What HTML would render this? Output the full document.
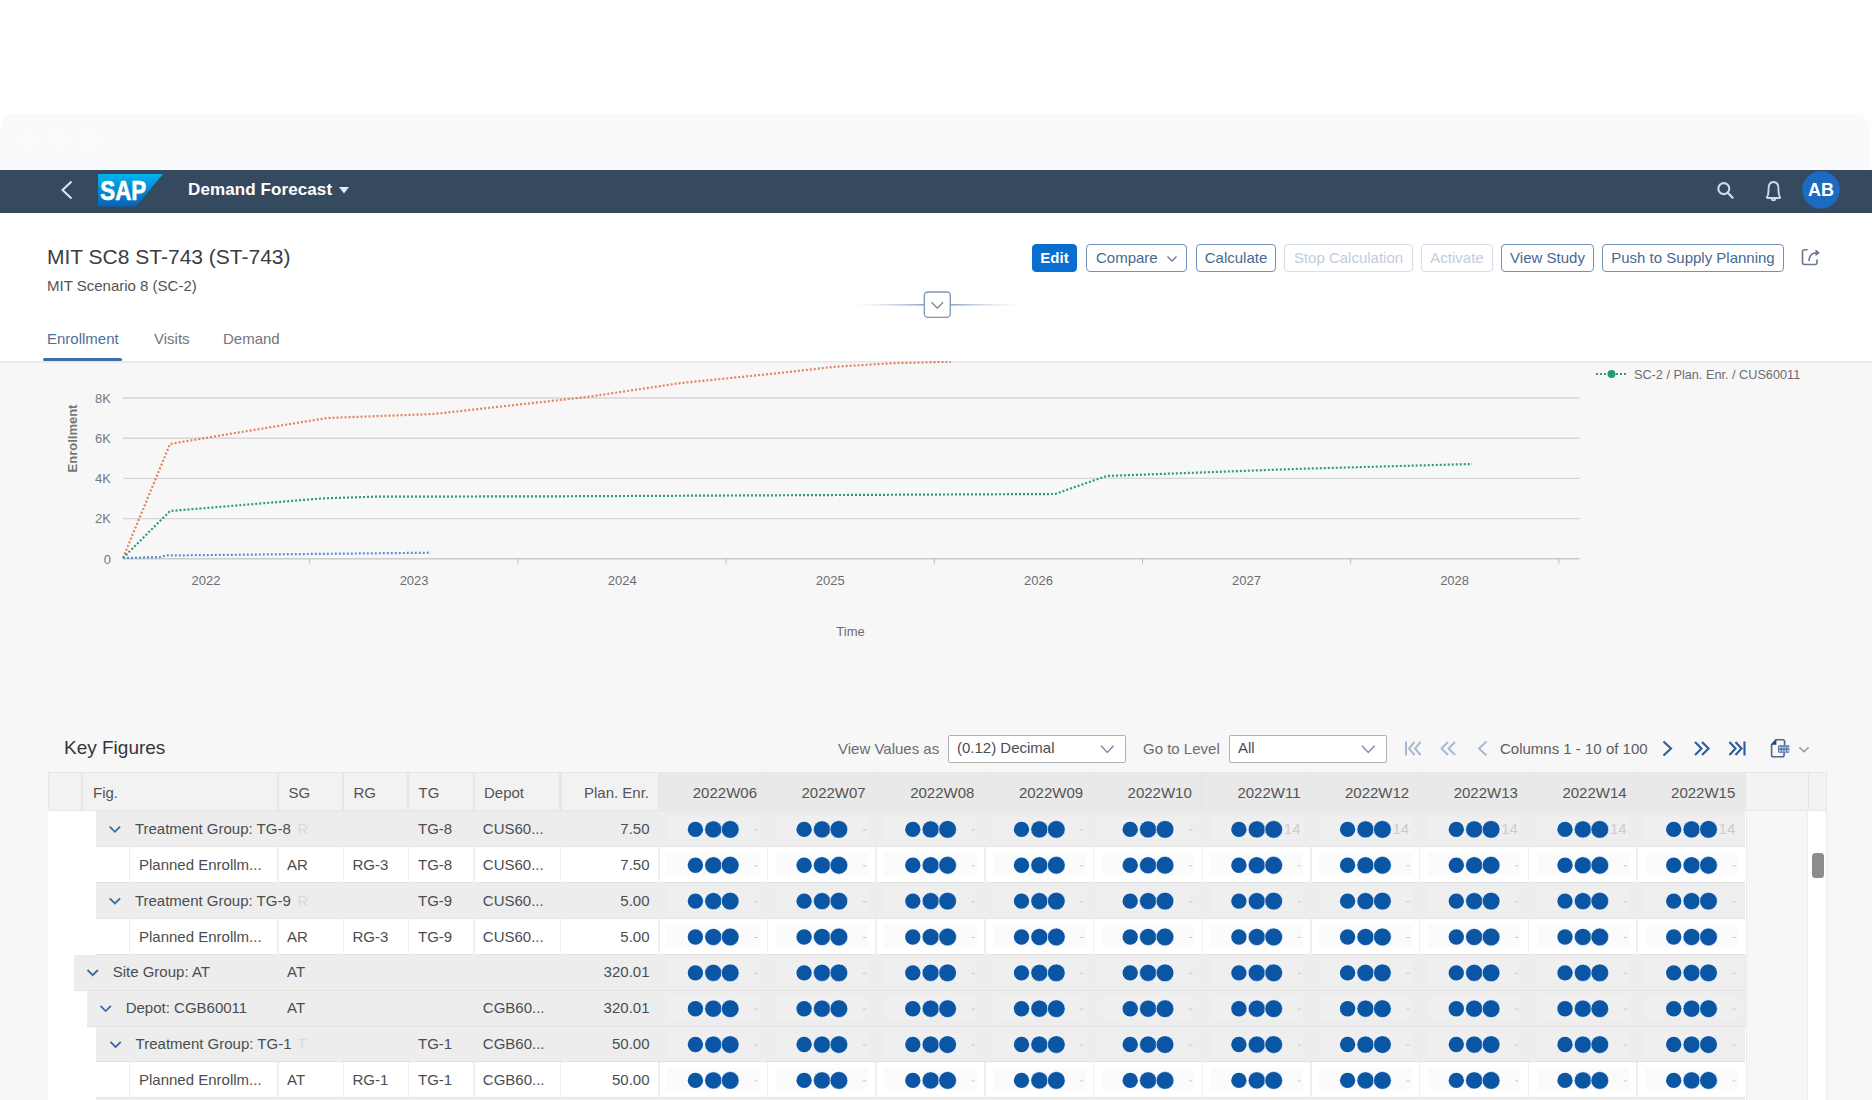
<!DOCTYPE html>
<html><head><meta charset="utf-8">
<style>
*{box-sizing:border-box;margin:0;padding:0}
html,body{width:1872px;height:1100px;overflow:hidden;background:#fff;font-family:"Liberation Sans",sans-serif;color:#32363a}
.a{position:absolute;white-space:nowrap}
.btn{top:244px;height:28px;border:1px solid #7390b8;border-radius:4px;background:#fff;color:#4a6890;font-size:15px;line-height:25px;text-align:center;letter-spacing:0}
.btn.dis{border-color:#d5dde8;color:#c2cddb}
.t{font-size:15px;line-height:18px;color:#4a4d50}
</style></head><body>

<div class="a" style="left:0;top:114px;width:1870px;height:1000px;background:#f9fafb;border-radius:15px 15px 0 0"></div>
<div class="a" style="left:20px;top:131px;width:17px;height:17px;border-radius:50%;background:#fbfbfc"></div>
<div class="a" style="left:51px;top:131px;width:17px;height:17px;border-radius:50%;background:#fbfbfc"></div>
<div class="a" style="left:81px;top:131px;width:17px;height:17px;border-radius:50%;background:#fbfbfc"></div>
<div class="a" style="left:0;top:170px;width:1872px;height:43px;background:#354a5f"></div>
<svg class="a" style="left:0;top:170px" width="1872" height="43">
  <path d="M71.5 11.5 L62.5 20 L71.5 28.5" fill="none" stroke="#e3e9ef" stroke-width="2"/>
  <defs><linearGradient id="sapg" x1="0" y1="0" x2="0" y2="1"><stop offset="0" stop-color="#00b4f0"/><stop offset="1" stop-color="#0a60b8"/></linearGradient></defs>
  <polygon points="98,4 163,4 136,36.5 98,36.5" fill="url(#sapg)"/>
  <text x="100.3" y="29.8" font-family="Liberation Sans" font-weight="bold" font-size="27" fill="#fff" stroke="#fff" stroke-width="0.7" textLength="46" lengthAdjust="spacingAndGlyphs">SAP</text>
  <polygon points="339,17 349,17 344,23.5" fill="#dfe7ef"/>
  <circle cx="1723.8" cy="18.6" r="5.5" fill="none" stroke="#d0dae5" stroke-width="2.1"/>
  <path d="M1727.8 22.8 L1732.5 27.6" stroke="#d0dae5" stroke-width="2.3" stroke-linecap="round"/>
  <path d="M1766.5 28 L1780.5 28 M1766.5 28 C1769 25 1768.5 22 1768.5 19 C1768.5 14 1771 12 1773.5 12 C1776 12 1778.5 14 1778.5 19 C1778.5 22 1778 25 1780.5 28 M1771.5 28.5 C1772 31 1775 31 1775.5 28.5" fill="none" stroke="#d0dae5" stroke-width="1.9"/>
  <circle cx="1821" cy="19.8" r="18.8" fill="#1c6bc2"/>
  <text x="1821" y="26" text-anchor="middle" font-family="Liberation Sans" font-weight="bold" font-size="18" fill="#fff">AB</text>
</svg>
<div class="a" style="left:188px;top:179px;font-size:17px;font-weight:bold;color:#fff;line-height:22px;letter-spacing:0.1px">Demand Forecast</div>

<div class="a" style="left:0;top:213px;width:1872px;height:148px;background:#fff"></div>
<div class="a" style="left:47px;top:245px;font-size:21px;line-height:24px;color:#3a3d40">MIT SC8 ST-743 (ST-743)</div>
<div class="a" style="left:47px;top:277px;font-size:15px;line-height:18px;color:#515456">MIT Scenario 8 (SC-2)</div>
<div class="a" style="left:47px;top:330px;font-size:15px;line-height:18px;color:#4a6f9c">Enrollment</div>
<div class="a" style="left:154px;top:330px;font-size:15px;line-height:18px;color:#737679">Visits</div>
<div class="a" style="left:223px;top:330px;font-size:15px;line-height:18px;color:#737679">Demand</div>
<div class="a" style="left:43px;top:358px;width:79px;height:3px;background:#3c6ea8;border-radius:2px"></div>
<div class="a btn" style="left:1032px;width:45px;background:#0a6ed1;border-color:#0a6ed1;color:#fff;font-weight:bold">Edit</div>
<div class="a btn" style="left:1086px;width:101px;text-align:left;padding-left:9px">Compare</div>
<div class="a btn" style="left:1196px;width:80px">Calculate</div>
<div class="a btn dis" style="left:1284px;width:129px">Stop Calculation</div>
<div class="a btn dis" style="left:1421px;width:72px">Activate</div>
<div class="a btn" style="left:1501px;width:93px">View Study</div>
<div class="a btn" style="left:1602px;width:182px">Push to Supply Planning</div>
<svg class="a" style="left:0;top:213px" width="1872" height="148" viewBox="0 213 1872 148">
  <defs><linearGradient id="hl" x1="0" y1="0" x2="1" y2="0"><stop offset="0" stop-color="#c5d2e2" stop-opacity="0"/><stop offset="1" stop-color="#8fa6c4"/></linearGradient>
  <linearGradient id="hr" x1="0" y1="0" x2="1" y2="0"><stop offset="0" stop-color="#8fa6c4"/><stop offset="1" stop-color="#c5d2e2" stop-opacity="0"/></linearGradient></defs>
  <rect x="856" y="304" width="68" height="1.6" fill="url(#hl)"/>
  <rect x="950.5" y="304" width="70" height="1.6" fill="url(#hr)"/>
  <rect x="924.3" y="292" width="26" height="25.3" rx="3.5" fill="#fff" stroke="#7f95b5" stroke-width="1.3"/>
  <path d="M931.5 302.3 L937.3 308.2 L943.1 302.3" fill="none" stroke="#84898f" stroke-width="1.4"/>
  <path d="M1167.5 256.5 L1172 261 L1176.5 256.5" fill="none" stroke="#5d7596" stroke-width="1.3"/>
  <g fill="none" stroke="#68788f" stroke-width="1.6" stroke-linecap="round">
    <path d="M1807 249.8 L1804.5 249.8 Q1802.5 249.8 1802.5 251.8 L1802.5 262.5 Q1802.5 264.5 1804.5 264.5 L1815 264.5 Q1817 264.5 1817 262.5 L1817 260"/>
    <path d="M1809 260.5 Q1809.5 253.5 1816 252.7"/>
  </g>
  <path d="M1815.5 249.3 L1819.8 252.7 L1815.5 256.3 Z" fill="#68788f"/>
</svg>

<div class="a" style="left:0;top:361px;width:1872px;height:739px;background:#f7f7f7"></div>
<div class="a" style="left:0;top:361px;width:1872px;height:3px;background:linear-gradient(#e4e4e4,#f7f7f7)"></div>
<svg class="a" style="left:0;top:361px" width="1872" height="739" viewBox="0 361 1872 739">
  <g stroke="#d6d6d6" stroke-width="1.4">
    <line x1="123" y1="398" x2="1579.5" y2="398"/>
    <line x1="123" y1="438.2" x2="1579.5" y2="438.2"/>
    <line x1="123" y1="478.4" x2="1579.5" y2="478.4"/>
    <line x1="123" y1="518.6" x2="1579.5" y2="518.6"/>
  </g>
  <line x1="123" y1="558.8" x2="1579.5" y2="558.8" stroke="#cacaca" stroke-width="1.4"/>
  <g stroke="#b8b8b8" stroke-width="1">
<line x1="309.7" y1="559" x2="309.7" y2="563.5"/>
<line x1="517.9" y1="559" x2="517.9" y2="563.5"/>
<line x1="726.1" y1="559" x2="726.1" y2="563.5"/>
<line x1="934.3" y1="559" x2="934.3" y2="563.5"/>
<line x1="1142.5" y1="559" x2="1142.5" y2="563.5"/>
<line x1="1350.7" y1="559" x2="1350.7" y2="563.5"/>
<line x1="1558.9" y1="559" x2="1558.9" y2="563.5"/>
</g>
  <g font-family="Liberation Sans" font-size="13" fill="#74777a" text-anchor="end">
    <text x="111" y="402.7">8K</text>
    <text x="111" y="442.9">6K</text>
    <text x="111" y="483.1">4K</text>
    <text x="111" y="523.3">2K</text>
    <text x="111" y="563.5">0</text>
  </g>
  <g font-family="Liberation Sans" font-size="13" fill="#6a6d70" text-anchor="middle">
<text x="206.0" y="584.7">2022</text>
<text x="414.1" y="584.7">2023</text>
<text x="622.2" y="584.7">2024</text>
<text x="830.3" y="584.7">2025</text>
<text x="1038.4" y="584.7">2026</text>
<text x="1246.5" y="584.7">2027</text>
<text x="1454.6" y="584.7">2028</text>
<text x="850.5" y="635.7">Time</text>
    <text x="0" y="0" transform="translate(76.8 438.5) rotate(-90)" font-weight="bold" fill="#74777a">Enrollment</text>
  </g>
  <g fill="none" stroke-width="2.2" stroke-dasharray="2 2">
    <polyline stroke="#e2835e" points="123,558 170,444 211,437 327,418 433.5,414 560,400 587,397 681,383 775,373.5 834,366.8 893,363.2 951,361.6"/>
    <polyline stroke="#2a9c7c" points="123,558 170,511 322,498.4 374,496.7 560,496.3 1055,494 1106.5,476 1300,468.8 1472,464"/>
    <polyline stroke="#5b8ed6" points="123,558 160,557 166,555.5 431,552.7"/>
  </g>
  <line x1="1596" y1="374" x2="1627" y2="374" stroke="#28a07a" stroke-width="2" stroke-dasharray="2 2"/>
  <circle cx="1611.5" cy="374" r="4" fill="#1f9c73"/>
  <text x="1634" y="378.5" font-family="Liberation Sans" font-size="12.7" fill="#6a6d70">SC-2 / Plan. Enr. / CUS60011</text>
</svg>

<div class="a" style="left:64px;top:737px;font-size:19px;line-height:22px;color:#32363a">Key Figures</div>
<div class="a t" style="left:838px;top:740px;color:#6a6d70">View Values as</div>
<div class="a" style="left:948px;top:735px;width:178px;height:28px;background:#fff;border:1px solid #b0b0b0;border-radius:2px"></div>
<div class="a t" style="left:957px;top:739px;color:#4a4d50">(0.12) Decimal</div>
<div class="a t" style="left:1143px;top:740px;color:#6a6d70">Go to Level</div>
<div class="a" style="left:1229px;top:735px;width:158px;height:28px;background:#fff;border:1px solid #b0b0b0;border-radius:2px"></div>
<div class="a t" style="left:1238px;top:739px;color:#4a4d50">All</div>
<div class="a t" style="left:1500px;top:740px;color:#5a5d60">Columns 1 - 10 of 100</div>
<svg class="a" style="left:0;top:720px" width="1872" height="50" viewBox="0 720 1872 50">
  <g fill="none" stroke="#7d8fa6" stroke-width="1.5">
    <path d="M1101 745.8 L1107.3 752.5 L1113.6 745.8"/>
    <path d="M1362 745.8 L1368.3 752.5 L1374.6 745.8"/>
  </g>
  <g fill="none" stroke="#a7bad3" stroke-width="2">
    <path d="M1406 741.5 L1406 755.5"/>
    <path d="M1414.5 742 L1409 748.5 L1414.5 755 M1420.5 742 L1415 748.5 L1420.5 755"/>
    <path d="M1448 742 L1441.5 748.5 L1448 755 M1455 742 L1448.5 748.5 L1455 755"/>
    <path d="M1486.5 741.5 L1479 748.5 L1486.5 755.5"/>
  </g>
  <g fill="none" stroke="#2f5f99" stroke-width="2.2">
    <path d="M1663.5 741.5 L1671 748.5 L1663.5 755.5"/>
    <path d="M1695 742 L1701.5 748.5 L1695 755 M1702 742 L1708.5 748.5 L1702 755"/>
    <path d="M1729.5 742 L1735.5 748.5 L1729.5 755 M1735.5 742 L1741.5 748.5 L1735.5 755"/>
    <path d="M1744.5 741.5 L1744.5 755.5"/>
  </g>
  <path d="M1784.6 745.3 L1784.6 741.6 Q1784.6 739.8 1782.8 739.8 L1776 739.8 L1771.6 744.5 L1771.6 754.9 Q1771.6 756.7 1773.4 756.7 L1782.3 756.7 Q1784.1 756.7 1784.1 754.9 L1784.1 752.8" fill="none" stroke="#50668c" stroke-width="1.6"/>
  <path d="M1771.2 744.8 L1776.3 739.4 L1776.3 744.8 Z" fill="#1f4677"/>
  <rect x="1778" y="745.3" width="11.3" height="7.4" rx="1" fill="#4d74a4"/>
  <rect x="1779.0" y="746.6" width="1.8" height="1.9" fill="#bcd3ec"/><rect x="1779.0" y="749.9" width="1.8" height="1.9" fill="#bcd3ec"/><rect x="1781.7" y="746.6" width="1.8" height="1.9" fill="#bcd3ec"/><rect x="1781.7" y="749.9" width="1.8" height="1.9" fill="#bcd3ec"/><rect x="1784.4" y="746.6" width="1.8" height="1.9" fill="#bcd3ec"/><rect x="1784.4" y="749.9" width="1.8" height="1.9" fill="#bcd3ec"/><rect x="1787.1" y="746.6" width="1.8" height="1.9" fill="#bcd3ec"/><rect x="1787.1" y="749.9" width="1.8" height="1.9" fill="#bcd3ec"/>
  <path d="M1799.3 747.2 L1804 751.7 L1808.7 747.2" fill="none" stroke="#8d99a6" stroke-width="1.5"/>
</svg>

<div class="a" style="left:47.5px;top:772.0px;width:1779.5px;height:39.89999999999998px;background:#e6e6e6"></div>
<div class="a" style="left:49px;top:773.0px;width:32px;height:37.39999999999998px;background:#f2f2f2"></div>
<div class="a" style="left:83px;top:773.0px;width:194px;height:37.39999999999998px;background:#f2f2f2"></div>
<div class="a" style="left:279px;top:773.0px;width:63.30000000000001px;height:37.39999999999998px;background:#f2f2f2"></div>
<div class="a" style="left:344.3px;top:773.0px;width:63.0px;height:37.39999999999998px;background:#f2f2f2"></div>
<div class="a" style="left:409.3px;top:773.0px;width:63.5px;height:37.39999999999998px;background:#f2f2f2"></div>
<div class="a" style="left:474.8px;top:773.0px;width:84.69999999999999px;height:37.39999999999998px;background:#f2f2f2"></div>
<div class="a" style="left:561.5px;top:773.0px;width:96.0px;height:37.39999999999998px;background:#f2f2f2"></div>
<div class="a" style="left:659.0px;top:773.0px;width:107.7px;height:37.39999999999998px;background:#e9e9e9"></div>
<div class="a" style="left:767.7px;top:773.0px;width:107.7px;height:37.39999999999998px;background:#e9e9e9"></div>
<div class="a" style="left:876.4px;top:773.0px;width:107.7px;height:37.39999999999998px;background:#e9e9e9"></div>
<div class="a" style="left:985.1px;top:773.0px;width:107.7px;height:37.39999999999998px;background:#e9e9e9"></div>
<div class="a" style="left:1093.8px;top:773.0px;width:107.7px;height:37.39999999999998px;background:#e9e9e9"></div>
<div class="a" style="left:1202.5px;top:773.0px;width:107.7px;height:37.39999999999998px;background:#e9e9e9"></div>
<div class="a" style="left:1311.2px;top:773.0px;width:107.7px;height:37.39999999999998px;background:#e9e9e9"></div>
<div class="a" style="left:1419.9px;top:773.0px;width:107.7px;height:37.39999999999998px;background:#e9e9e9"></div>
<div class="a" style="left:1528.6px;top:773.0px;width:107.7px;height:37.39999999999998px;background:#e9e9e9"></div>
<div class="a" style="left:1637.3px;top:773.0px;width:107.7px;height:37.39999999999998px;background:#e9e9e9"></div>
<div class="a" style="left:1746.0px;top:773.0px;width:61.5px;height:37.39999999999998px;background:#f3f3f3"></div>
<div class="a" style="left:1808.5px;top:773.0px;width:17.5px;height:37.39999999999998px;background:#f3f3f3"></div>
<div class="a t" style="left:93px;top:783.5px;color:#545454">Fig.</div>
<div class="a t" style="left:288.5px;top:783.5px;color:#545454">SG</div>
<div class="a t" style="left:353.5px;top:783.5px;color:#545454">RG</div>
<div class="a t" style="left:418.5px;top:783.5px;color:#545454">TG</div>
<div class="a t" style="left:484px;top:783.5px;color:#545454">Depot</div>
<div class="a t" style="left:560px;width:89px;text-align:right;top:783.5px;color:#545454">Plan. Enr.</div>
<div class="a t" style="left:658.5px;width:98.5px;text-align:right;top:783.5px;color:#545454">2022W06</div>
<div class="a t" style="left:767.2px;width:98.5px;text-align:right;top:783.5px;color:#545454">2022W07</div>
<div class="a t" style="left:875.9px;width:98.5px;text-align:right;top:783.5px;color:#545454">2022W08</div>
<div class="a t" style="left:984.6px;width:98.5px;text-align:right;top:783.5px;color:#545454">2022W09</div>
<div class="a t" style="left:1093.3px;width:98.5px;text-align:right;top:783.5px;color:#545454">2022W10</div>
<div class="a t" style="left:1202.0px;width:98.5px;text-align:right;top:783.5px;color:#545454">2022W11</div>
<div class="a t" style="left:1310.7px;width:98.5px;text-align:right;top:783.5px;color:#545454">2022W12</div>
<div class="a t" style="left:1419.4px;width:98.5px;text-align:right;top:783.5px;color:#545454">2022W13</div>
<div class="a t" style="left:1528.1px;width:98.5px;text-align:right;top:783.5px;color:#545454">2022W14</div>
<div class="a t" style="left:1636.8px;width:98.5px;text-align:right;top:783.5px;color:#545454">2022W15</div>
<div class="a" style="left:48px;top:811.4px;width:1697.5px;height:288.6px;background:#fff"></div>
<div class="a" style="left:1745.5px;top:811.4px;width:62.5px;height:288.6px;background:#f7f7f7;border-left:1px solid #ececec;border-right:1px solid #ececec"></div>
<div class="a" style="left:1808px;top:811.4px;width:18.5px;height:288.6px;background:#fff;border-right:1px solid #ececec"></div>
<div class="a" style="left:1812.3px;top:852.5px;width:12px;height:25.5px;background:#8c8c8c;border-radius:3.5px"></div>
<div class="a" style="left:95.7px;top:811.40px;width:1649.8px;height:35.86px;background:#ededed;border-bottom:1px solid #e3e3e3"></div>
<div class="a t" style="left:134.9px;top:820.00px">Treatment Group: TG-8</div>
<div class="a t" style="left:297.5px;top:820.00px;color:#dadada">R</div>
<div class="a t" style="left:418px;top:820.00px">TG-8</div>
<div class="a t" style="left:482.8px;top:820.00px">CUS60...</div>
<div class="a t" style="left:560px;width:89.5px;text-align:right;top:820.00px">7.50</div>
<div class="a" style="left:667.0px;top:817.40px;width:92.5px;height:22px;background:#efefef"></div>
<div class="a" style="left:775.7px;top:817.40px;width:92.5px;height:22px;background:#efefef"></div>
<div class="a" style="left:884.4px;top:817.40px;width:92.5px;height:22px;background:#efefef"></div>
<div class="a" style="left:993.1px;top:817.40px;width:92.5px;height:22px;background:#efefef"></div>
<div class="a" style="left:1101.8px;top:817.40px;width:92.5px;height:22px;background:#efefef"></div>
<div class="a" style="left:1210.5px;top:817.40px;width:92.5px;height:22px;background:#efefef"></div>
<div class="a t" style="left:1262.0px;width:38.5px;text-align:right;top:820.00px;color:#cccccc">14</div>
<div class="a" style="left:1319.2px;top:817.40px;width:92.5px;height:22px;background:#efefef"></div>
<div class="a t" style="left:1370.7px;width:38.5px;text-align:right;top:820.00px;color:#cccccc">14</div>
<div class="a" style="left:1427.9px;top:817.40px;width:92.5px;height:22px;background:#efefef"></div>
<div class="a t" style="left:1479.4px;width:38.5px;text-align:right;top:820.00px;color:#cccccc">14</div>
<div class="a" style="left:1536.6px;top:817.40px;width:92.5px;height:22px;background:#efefef"></div>
<div class="a t" style="left:1588.1px;width:38.5px;text-align:right;top:820.00px;color:#cccccc">14</div>
<div class="a" style="left:1645.3px;top:817.40px;width:92.5px;height:22px;background:#efefef"></div>
<div class="a t" style="left:1696.8px;width:38.5px;text-align:right;top:820.00px;color:#cccccc">14</div>
<div class="a" style="left:95.7px;top:847.26px;width:1649.8px;height:35.86px;background:#ffffff;border-bottom:1px solid #e3e3e3"></div>
<div class="a" style="left:128.7px;top:847.26px;width:1.5px;height:35.86px;background:#efefef"></div>
<div class="a" style="left:277.3px;top:847.26px;width:1.5px;height:35.86px;background:#efefef"></div>
<div class="a" style="left:342.8px;top:847.26px;width:1.5px;height:35.86px;background:#efefef"></div>
<div class="a" style="left:407.7px;top:847.26px;width:1.5px;height:35.86px;background:#efefef"></div>
<div class="a" style="left:473.3px;top:847.26px;width:1.5px;height:35.86px;background:#efefef"></div>
<div class="a" style="left:559.8px;top:847.26px;width:1.5px;height:35.86px;background:#efefef"></div>
<div class="a" style="left:658.1px;top:847.26px;width:1.5px;height:35.86px;background:#efefef"></div>
<div class="a" style="left:766.7px;top:847.26px;width:1.5px;height:35.86px;background:#efefef"></div>
<div class="a" style="left:875.4px;top:847.26px;width:1.5px;height:35.86px;background:#efefef"></div>
<div class="a" style="left:984.1px;top:847.26px;width:1.5px;height:35.86px;background:#efefef"></div>
<div class="a" style="left:1092.8px;top:847.26px;width:1.5px;height:35.86px;background:#efefef"></div>
<div class="a" style="left:1201.5px;top:847.26px;width:1.5px;height:35.86px;background:#efefef"></div>
<div class="a" style="left:1310.2px;top:847.26px;width:1.5px;height:35.86px;background:#efefef"></div>
<div class="a" style="left:1418.9px;top:847.26px;width:1.5px;height:35.86px;background:#efefef"></div>
<div class="a" style="left:1527.6px;top:847.26px;width:1.5px;height:35.86px;background:#efefef"></div>
<div class="a" style="left:1636.3px;top:847.26px;width:1.5px;height:35.86px;background:#efefef"></div>
<div class="a t" style="left:139px;top:855.86px">Planned Enrollm...</div>
<div class="a t" style="left:287px;top:855.86px">AR</div>
<div class="a t" style="left:352.5px;top:855.86px">RG-3</div>
<div class="a t" style="left:418px;top:855.86px">TG-8</div>
<div class="a t" style="left:482.8px;top:855.86px">CUS60...</div>
<div class="a t" style="left:560px;width:89.5px;text-align:right;top:855.86px">7.50</div>
<div class="a" style="left:667.0px;top:853.26px;width:92.5px;height:22px;background:#fbfbfb"></div>
<div class="a" style="left:775.7px;top:853.26px;width:92.5px;height:22px;background:#fbfbfb"></div>
<div class="a" style="left:884.4px;top:853.26px;width:92.5px;height:22px;background:#fbfbfb"></div>
<div class="a" style="left:993.1px;top:853.26px;width:92.5px;height:22px;background:#fbfbfb"></div>
<div class="a" style="left:1101.8px;top:853.26px;width:92.5px;height:22px;background:#fbfbfb"></div>
<div class="a" style="left:1210.5px;top:853.26px;width:92.5px;height:22px;background:#fbfbfb"></div>
<div class="a" style="left:1319.2px;top:853.26px;width:92.5px;height:22px;background:#fbfbfb"></div>
<div class="a" style="left:1427.9px;top:853.26px;width:92.5px;height:22px;background:#fbfbfb"></div>
<div class="a" style="left:1536.6px;top:853.26px;width:92.5px;height:22px;background:#fbfbfb"></div>
<div class="a" style="left:1645.3px;top:853.26px;width:92.5px;height:22px;background:#fbfbfb"></div>
<div class="a" style="left:95.7px;top:883.12px;width:1649.8px;height:35.86px;background:#ededed;border-bottom:1px solid #e3e3e3"></div>
<div class="a t" style="left:134.9px;top:891.72px">Treatment Group: TG-9</div>
<div class="a t" style="left:297.5px;top:891.72px;color:#dadada">R</div>
<div class="a t" style="left:418px;top:891.72px">TG-9</div>
<div class="a t" style="left:482.8px;top:891.72px">CUS60...</div>
<div class="a t" style="left:560px;width:89.5px;text-align:right;top:891.72px">5.00</div>
<div class="a" style="left:667.0px;top:889.12px;width:92.5px;height:22px;background:#efefef"></div>
<div class="a" style="left:775.7px;top:889.12px;width:92.5px;height:22px;background:#efefef"></div>
<div class="a" style="left:884.4px;top:889.12px;width:92.5px;height:22px;background:#efefef"></div>
<div class="a" style="left:993.1px;top:889.12px;width:92.5px;height:22px;background:#efefef"></div>
<div class="a" style="left:1101.8px;top:889.12px;width:92.5px;height:22px;background:#efefef"></div>
<div class="a" style="left:1210.5px;top:889.12px;width:92.5px;height:22px;background:#efefef"></div>
<div class="a" style="left:1319.2px;top:889.12px;width:92.5px;height:22px;background:#efefef"></div>
<div class="a" style="left:1427.9px;top:889.12px;width:92.5px;height:22px;background:#efefef"></div>
<div class="a" style="left:1536.6px;top:889.12px;width:92.5px;height:22px;background:#efefef"></div>
<div class="a" style="left:1645.3px;top:889.12px;width:92.5px;height:22px;background:#efefef"></div>
<div class="a" style="left:95.7px;top:918.98px;width:1649.8px;height:35.86px;background:#ffffff;border-bottom:1px solid #e3e3e3"></div>
<div class="a" style="left:128.7px;top:918.98px;width:1.5px;height:35.86px;background:#efefef"></div>
<div class="a" style="left:277.3px;top:918.98px;width:1.5px;height:35.86px;background:#efefef"></div>
<div class="a" style="left:342.8px;top:918.98px;width:1.5px;height:35.86px;background:#efefef"></div>
<div class="a" style="left:407.7px;top:918.98px;width:1.5px;height:35.86px;background:#efefef"></div>
<div class="a" style="left:473.3px;top:918.98px;width:1.5px;height:35.86px;background:#efefef"></div>
<div class="a" style="left:559.8px;top:918.98px;width:1.5px;height:35.86px;background:#efefef"></div>
<div class="a" style="left:658.1px;top:918.98px;width:1.5px;height:35.86px;background:#efefef"></div>
<div class="a" style="left:766.7px;top:918.98px;width:1.5px;height:35.86px;background:#efefef"></div>
<div class="a" style="left:875.4px;top:918.98px;width:1.5px;height:35.86px;background:#efefef"></div>
<div class="a" style="left:984.1px;top:918.98px;width:1.5px;height:35.86px;background:#efefef"></div>
<div class="a" style="left:1092.8px;top:918.98px;width:1.5px;height:35.86px;background:#efefef"></div>
<div class="a" style="left:1201.5px;top:918.98px;width:1.5px;height:35.86px;background:#efefef"></div>
<div class="a" style="left:1310.2px;top:918.98px;width:1.5px;height:35.86px;background:#efefef"></div>
<div class="a" style="left:1418.9px;top:918.98px;width:1.5px;height:35.86px;background:#efefef"></div>
<div class="a" style="left:1527.6px;top:918.98px;width:1.5px;height:35.86px;background:#efefef"></div>
<div class="a" style="left:1636.3px;top:918.98px;width:1.5px;height:35.86px;background:#efefef"></div>
<div class="a t" style="left:139px;top:927.58px">Planned Enrollm...</div>
<div class="a t" style="left:287px;top:927.58px">AR</div>
<div class="a t" style="left:352.5px;top:927.58px">RG-3</div>
<div class="a t" style="left:418px;top:927.58px">TG-9</div>
<div class="a t" style="left:482.8px;top:927.58px">CUS60...</div>
<div class="a t" style="left:560px;width:89.5px;text-align:right;top:927.58px">5.00</div>
<div class="a" style="left:667.0px;top:924.98px;width:92.5px;height:22px;background:#fbfbfb"></div>
<div class="a" style="left:775.7px;top:924.98px;width:92.5px;height:22px;background:#fbfbfb"></div>
<div class="a" style="left:884.4px;top:924.98px;width:92.5px;height:22px;background:#fbfbfb"></div>
<div class="a" style="left:993.1px;top:924.98px;width:92.5px;height:22px;background:#fbfbfb"></div>
<div class="a" style="left:1101.8px;top:924.98px;width:92.5px;height:22px;background:#fbfbfb"></div>
<div class="a" style="left:1210.5px;top:924.98px;width:92.5px;height:22px;background:#fbfbfb"></div>
<div class="a" style="left:1319.2px;top:924.98px;width:92.5px;height:22px;background:#fbfbfb"></div>
<div class="a" style="left:1427.9px;top:924.98px;width:92.5px;height:22px;background:#fbfbfb"></div>
<div class="a" style="left:1536.6px;top:924.98px;width:92.5px;height:22px;background:#fbfbfb"></div>
<div class="a" style="left:1645.3px;top:924.98px;width:92.5px;height:22px;background:#fbfbfb"></div>
<div class="a" style="left:73.5px;top:954.84px;width:1672.0px;height:35.86px;background:#ededed;border-bottom:1px solid #e3e3e3"></div>
<div class="a t" style="left:112.7px;top:963.44px">Site Group: AT</div>
<div class="a t" style="left:287px;top:963.44px">AT</div>
<div class="a t" style="left:560px;width:89.5px;text-align:right;top:963.44px">320.01</div>
<div class="a" style="left:667.0px;top:960.84px;width:92.5px;height:22px;background:#efefef"></div>
<div class="a" style="left:775.7px;top:960.84px;width:92.5px;height:22px;background:#efefef"></div>
<div class="a" style="left:884.4px;top:960.84px;width:92.5px;height:22px;background:#efefef"></div>
<div class="a" style="left:993.1px;top:960.84px;width:92.5px;height:22px;background:#efefef"></div>
<div class="a" style="left:1101.8px;top:960.84px;width:92.5px;height:22px;background:#efefef"></div>
<div class="a" style="left:1210.5px;top:960.84px;width:92.5px;height:22px;background:#efefef"></div>
<div class="a" style="left:1319.2px;top:960.84px;width:92.5px;height:22px;background:#efefef"></div>
<div class="a" style="left:1427.9px;top:960.84px;width:92.5px;height:22px;background:#efefef"></div>
<div class="a" style="left:1536.6px;top:960.84px;width:92.5px;height:22px;background:#efefef"></div>
<div class="a" style="left:1645.3px;top:960.84px;width:92.5px;height:22px;background:#efefef"></div>
<div class="a" style="left:86.5px;top:990.70px;width:1659.0px;height:35.86px;background:#ededed;border-bottom:1px solid #e3e3e3"></div>
<div class="a t" style="left:125.7px;top:999.30px">Depot: CGB60011</div>
<div class="a t" style="left:287px;top:999.30px">AT</div>
<div class="a t" style="left:482.8px;top:999.30px">CGB60...</div>
<div class="a t" style="left:560px;width:89.5px;text-align:right;top:999.30px">320.01</div>
<div class="a" style="left:667.0px;top:996.70px;width:92.5px;height:22px;background:#efefef"></div>
<div class="a" style="left:775.7px;top:996.70px;width:92.5px;height:22px;background:#efefef"></div>
<div class="a" style="left:884.4px;top:996.70px;width:92.5px;height:22px;background:#efefef"></div>
<div class="a" style="left:993.1px;top:996.70px;width:92.5px;height:22px;background:#efefef"></div>
<div class="a" style="left:1101.8px;top:996.70px;width:92.5px;height:22px;background:#efefef"></div>
<div class="a" style="left:1210.5px;top:996.70px;width:92.5px;height:22px;background:#efefef"></div>
<div class="a" style="left:1319.2px;top:996.70px;width:92.5px;height:22px;background:#efefef"></div>
<div class="a" style="left:1427.9px;top:996.70px;width:92.5px;height:22px;background:#efefef"></div>
<div class="a" style="left:1536.6px;top:996.70px;width:92.5px;height:22px;background:#efefef"></div>
<div class="a" style="left:1645.3px;top:996.70px;width:92.5px;height:22px;background:#efefef"></div>
<div class="a" style="left:96.4px;top:1026.56px;width:1649.1px;height:35.86px;background:#ededed;border-bottom:1px solid #e3e3e3"></div>
<div class="a t" style="left:135.6px;top:1035.16px">Treatment Group: TG-1</div>
<div class="a t" style="left:297.5px;top:1035.16px;color:#dadada">T</div>
<div class="a t" style="left:418px;top:1035.16px">TG-1</div>
<div class="a t" style="left:482.8px;top:1035.16px">CGB60...</div>
<div class="a t" style="left:560px;width:89.5px;text-align:right;top:1035.16px">50.00</div>
<div class="a" style="left:667.0px;top:1032.56px;width:92.5px;height:22px;background:#efefef"></div>
<div class="a" style="left:775.7px;top:1032.56px;width:92.5px;height:22px;background:#efefef"></div>
<div class="a" style="left:884.4px;top:1032.56px;width:92.5px;height:22px;background:#efefef"></div>
<div class="a" style="left:993.1px;top:1032.56px;width:92.5px;height:22px;background:#efefef"></div>
<div class="a" style="left:1101.8px;top:1032.56px;width:92.5px;height:22px;background:#efefef"></div>
<div class="a" style="left:1210.5px;top:1032.56px;width:92.5px;height:22px;background:#efefef"></div>
<div class="a" style="left:1319.2px;top:1032.56px;width:92.5px;height:22px;background:#efefef"></div>
<div class="a" style="left:1427.9px;top:1032.56px;width:92.5px;height:22px;background:#efefef"></div>
<div class="a" style="left:1536.6px;top:1032.56px;width:92.5px;height:22px;background:#efefef"></div>
<div class="a" style="left:1645.3px;top:1032.56px;width:92.5px;height:22px;background:#efefef"></div>
<div class="a" style="left:96.4px;top:1062.42px;width:1649.1px;height:35.86px;background:#ffffff;border-bottom:1px solid #e3e3e3"></div>
<div class="a" style="left:128.7px;top:1062.42px;width:1.5px;height:35.86px;background:#efefef"></div>
<div class="a" style="left:277.3px;top:1062.42px;width:1.5px;height:35.86px;background:#efefef"></div>
<div class="a" style="left:342.8px;top:1062.42px;width:1.5px;height:35.86px;background:#efefef"></div>
<div class="a" style="left:407.7px;top:1062.42px;width:1.5px;height:35.86px;background:#efefef"></div>
<div class="a" style="left:473.3px;top:1062.42px;width:1.5px;height:35.86px;background:#efefef"></div>
<div class="a" style="left:559.8px;top:1062.42px;width:1.5px;height:35.86px;background:#efefef"></div>
<div class="a" style="left:658.1px;top:1062.42px;width:1.5px;height:35.86px;background:#efefef"></div>
<div class="a" style="left:766.7px;top:1062.42px;width:1.5px;height:35.86px;background:#efefef"></div>
<div class="a" style="left:875.4px;top:1062.42px;width:1.5px;height:35.86px;background:#efefef"></div>
<div class="a" style="left:984.1px;top:1062.42px;width:1.5px;height:35.86px;background:#efefef"></div>
<div class="a" style="left:1092.8px;top:1062.42px;width:1.5px;height:35.86px;background:#efefef"></div>
<div class="a" style="left:1201.5px;top:1062.42px;width:1.5px;height:35.86px;background:#efefef"></div>
<div class="a" style="left:1310.2px;top:1062.42px;width:1.5px;height:35.86px;background:#efefef"></div>
<div class="a" style="left:1418.9px;top:1062.42px;width:1.5px;height:35.86px;background:#efefef"></div>
<div class="a" style="left:1527.6px;top:1062.42px;width:1.5px;height:35.86px;background:#efefef"></div>
<div class="a" style="left:1636.3px;top:1062.42px;width:1.5px;height:35.86px;background:#efefef"></div>
<div class="a t" style="left:139px;top:1071.02px">Planned Enrollm...</div>
<div class="a t" style="left:287px;top:1071.02px">AT</div>
<div class="a t" style="left:352.5px;top:1071.02px">RG-1</div>
<div class="a t" style="left:418px;top:1071.02px">TG-1</div>
<div class="a t" style="left:482.8px;top:1071.02px">CGB60...</div>
<div class="a t" style="left:560px;width:89.5px;text-align:right;top:1071.02px">50.00</div>
<div class="a" style="left:667.0px;top:1068.42px;width:92.5px;height:22px;background:#fbfbfb"></div>
<div class="a" style="left:775.7px;top:1068.42px;width:92.5px;height:22px;background:#fbfbfb"></div>
<div class="a" style="left:884.4px;top:1068.42px;width:92.5px;height:22px;background:#fbfbfb"></div>
<div class="a" style="left:993.1px;top:1068.42px;width:92.5px;height:22px;background:#fbfbfb"></div>
<div class="a" style="left:1101.8px;top:1068.42px;width:92.5px;height:22px;background:#fbfbfb"></div>
<div class="a" style="left:1210.5px;top:1068.42px;width:92.5px;height:22px;background:#fbfbfb"></div>
<div class="a" style="left:1319.2px;top:1068.42px;width:92.5px;height:22px;background:#fbfbfb"></div>
<div class="a" style="left:1427.9px;top:1068.42px;width:92.5px;height:22px;background:#fbfbfb"></div>
<div class="a" style="left:1536.6px;top:1068.42px;width:92.5px;height:22px;background:#fbfbfb"></div>
<div class="a" style="left:1645.3px;top:1068.42px;width:92.5px;height:22px;background:#fbfbfb"></div>
<div class="a" style="left:96.4px;top:1098.28px;width:1649.1px;height:35.86px;background:#ededed;border-bottom:1px solid #e3e3e3"></div>
<div class="a" style="left:667.0px;top:1104.28px;width:92.5px;height:22px;background:#efefef"></div>
<div class="a" style="left:775.7px;top:1104.28px;width:92.5px;height:22px;background:#efefef"></div>
<div class="a" style="left:884.4px;top:1104.28px;width:92.5px;height:22px;background:#efefef"></div>
<div class="a" style="left:993.1px;top:1104.28px;width:92.5px;height:22px;background:#efefef"></div>
<div class="a" style="left:1101.8px;top:1104.28px;width:92.5px;height:22px;background:#efefef"></div>
<div class="a" style="left:1210.5px;top:1104.28px;width:92.5px;height:22px;background:#efefef"></div>
<div class="a" style="left:1319.2px;top:1104.28px;width:92.5px;height:22px;background:#efefef"></div>
<div class="a" style="left:1427.9px;top:1104.28px;width:92.5px;height:22px;background:#efefef"></div>
<div class="a" style="left:1536.6px;top:1104.28px;width:92.5px;height:22px;background:#efefef"></div>
<div class="a" style="left:1645.3px;top:1104.28px;width:92.5px;height:22px;background:#efefef"></div>
<svg class="a" style="left:0;top:0" width="1872" height="1100"><path d="M109.7 826.6 L114.9 831.8 L120.1 826.6" fill="none" stroke="#3b6aa0" stroke-width="1.8"/><circle cx="695.4" cy="829.40" r="7.7" fill="#0b55a5"/><circle cx="713.3" cy="829.40" r="8.6" fill="#0b55a5" stroke="#fff" stroke-width="0.6"/><circle cx="730.2" cy="829.40" r="8.9" fill="#0b55a5" stroke="#fff" stroke-width="0.6"/><line x1="754.0" y1="829.90" x2="757.5" y2="829.90" stroke="#c8c8c8" stroke-width="1"/><circle cx="804.1" cy="829.40" r="7.7" fill="#0b55a5"/><circle cx="822.0" cy="829.40" r="8.6" fill="#0b55a5" stroke="#fff" stroke-width="0.6"/><circle cx="838.9" cy="829.40" r="8.9" fill="#0b55a5" stroke="#fff" stroke-width="0.6"/><line x1="862.7" y1="829.90" x2="866.2" y2="829.90" stroke="#c8c8c8" stroke-width="1"/><circle cx="912.8" cy="829.40" r="7.7" fill="#0b55a5"/><circle cx="930.7" cy="829.40" r="8.6" fill="#0b55a5" stroke="#fff" stroke-width="0.6"/><circle cx="947.6" cy="829.40" r="8.9" fill="#0b55a5" stroke="#fff" stroke-width="0.6"/><line x1="971.4" y1="829.90" x2="974.9" y2="829.90" stroke="#c8c8c8" stroke-width="1"/><circle cx="1021.5" cy="829.40" r="7.7" fill="#0b55a5"/><circle cx="1039.4" cy="829.40" r="8.6" fill="#0b55a5" stroke="#fff" stroke-width="0.6"/><circle cx="1056.3" cy="829.40" r="8.9" fill="#0b55a5" stroke="#fff" stroke-width="0.6"/><line x1="1080.1" y1="829.90" x2="1083.6" y2="829.90" stroke="#c8c8c8" stroke-width="1"/><circle cx="1130.2" cy="829.40" r="7.7" fill="#0b55a5"/><circle cx="1148.1" cy="829.40" r="8.6" fill="#0b55a5" stroke="#fff" stroke-width="0.6"/><circle cx="1165.0" cy="829.40" r="8.9" fill="#0b55a5" stroke="#fff" stroke-width="0.6"/><line x1="1188.8" y1="829.90" x2="1192.3" y2="829.90" stroke="#c8c8c8" stroke-width="1"/><circle cx="1238.9" cy="829.40" r="7.7" fill="#0b55a5"/><circle cx="1256.8" cy="829.40" r="8.6" fill="#0b55a5" stroke="#fff" stroke-width="0.6"/><circle cx="1273.7" cy="829.40" r="8.9" fill="#0b55a5" stroke="#fff" stroke-width="0.6"/><circle cx="1347.6" cy="829.40" r="7.7" fill="#0b55a5"/><circle cx="1365.5" cy="829.40" r="8.6" fill="#0b55a5" stroke="#fff" stroke-width="0.6"/><circle cx="1382.4" cy="829.40" r="8.9" fill="#0b55a5" stroke="#fff" stroke-width="0.6"/><circle cx="1456.3" cy="829.40" r="7.7" fill="#0b55a5"/><circle cx="1474.2" cy="829.40" r="8.6" fill="#0b55a5" stroke="#fff" stroke-width="0.6"/><circle cx="1491.1" cy="829.40" r="8.9" fill="#0b55a5" stroke="#fff" stroke-width="0.6"/><circle cx="1565.0" cy="829.40" r="7.7" fill="#0b55a5"/><circle cx="1582.9" cy="829.40" r="8.6" fill="#0b55a5" stroke="#fff" stroke-width="0.6"/><circle cx="1599.8" cy="829.40" r="8.9" fill="#0b55a5" stroke="#fff" stroke-width="0.6"/><circle cx="1673.7" cy="829.40" r="7.7" fill="#0b55a5"/><circle cx="1691.6" cy="829.40" r="8.6" fill="#0b55a5" stroke="#fff" stroke-width="0.6"/><circle cx="1708.5" cy="829.40" r="8.9" fill="#0b55a5" stroke="#fff" stroke-width="0.6"/><circle cx="695.4" cy="865.26" r="7.7" fill="#0b55a5"/><circle cx="713.3" cy="865.26" r="8.6" fill="#0b55a5" stroke="#fff" stroke-width="0.6"/><circle cx="730.2" cy="865.26" r="8.9" fill="#0b55a5" stroke="#fff" stroke-width="0.6"/><line x1="754.0" y1="865.76" x2="757.5" y2="865.76" stroke="#c8c8c8" stroke-width="1"/><circle cx="804.1" cy="865.26" r="7.7" fill="#0b55a5"/><circle cx="822.0" cy="865.26" r="8.6" fill="#0b55a5" stroke="#fff" stroke-width="0.6"/><circle cx="838.9" cy="865.26" r="8.9" fill="#0b55a5" stroke="#fff" stroke-width="0.6"/><line x1="862.7" y1="865.76" x2="866.2" y2="865.76" stroke="#c8c8c8" stroke-width="1"/><circle cx="912.8" cy="865.26" r="7.7" fill="#0b55a5"/><circle cx="930.7" cy="865.26" r="8.6" fill="#0b55a5" stroke="#fff" stroke-width="0.6"/><circle cx="947.6" cy="865.26" r="8.9" fill="#0b55a5" stroke="#fff" stroke-width="0.6"/><line x1="971.4" y1="865.76" x2="974.9" y2="865.76" stroke="#c8c8c8" stroke-width="1"/><circle cx="1021.5" cy="865.26" r="7.7" fill="#0b55a5"/><circle cx="1039.4" cy="865.26" r="8.6" fill="#0b55a5" stroke="#fff" stroke-width="0.6"/><circle cx="1056.3" cy="865.26" r="8.9" fill="#0b55a5" stroke="#fff" stroke-width="0.6"/><line x1="1080.1" y1="865.76" x2="1083.6" y2="865.76" stroke="#c8c8c8" stroke-width="1"/><circle cx="1130.2" cy="865.26" r="7.7" fill="#0b55a5"/><circle cx="1148.1" cy="865.26" r="8.6" fill="#0b55a5" stroke="#fff" stroke-width="0.6"/><circle cx="1165.0" cy="865.26" r="8.9" fill="#0b55a5" stroke="#fff" stroke-width="0.6"/><line x1="1188.8" y1="865.76" x2="1192.3" y2="865.76" stroke="#c8c8c8" stroke-width="1"/><circle cx="1238.9" cy="865.26" r="7.7" fill="#0b55a5"/><circle cx="1256.8" cy="865.26" r="8.6" fill="#0b55a5" stroke="#fff" stroke-width="0.6"/><circle cx="1273.7" cy="865.26" r="8.9" fill="#0b55a5" stroke="#fff" stroke-width="0.6"/><line x1="1297.5" y1="865.76" x2="1301.0" y2="865.76" stroke="#c8c8c8" stroke-width="1"/><circle cx="1347.6" cy="865.26" r="7.7" fill="#0b55a5"/><circle cx="1365.5" cy="865.26" r="8.6" fill="#0b55a5" stroke="#fff" stroke-width="0.6"/><circle cx="1382.4" cy="865.26" r="8.9" fill="#0b55a5" stroke="#fff" stroke-width="0.6"/><line x1="1406.2" y1="865.76" x2="1409.7" y2="865.76" stroke="#c8c8c8" stroke-width="1"/><circle cx="1456.3" cy="865.26" r="7.7" fill="#0b55a5"/><circle cx="1474.2" cy="865.26" r="8.6" fill="#0b55a5" stroke="#fff" stroke-width="0.6"/><circle cx="1491.1" cy="865.26" r="8.9" fill="#0b55a5" stroke="#fff" stroke-width="0.6"/><line x1="1514.9" y1="865.76" x2="1518.4" y2="865.76" stroke="#c8c8c8" stroke-width="1"/><circle cx="1565.0" cy="865.26" r="7.7" fill="#0b55a5"/><circle cx="1582.9" cy="865.26" r="8.6" fill="#0b55a5" stroke="#fff" stroke-width="0.6"/><circle cx="1599.8" cy="865.26" r="8.9" fill="#0b55a5" stroke="#fff" stroke-width="0.6"/><line x1="1623.6" y1="865.76" x2="1627.1" y2="865.76" stroke="#c8c8c8" stroke-width="1"/><circle cx="1673.7" cy="865.26" r="7.7" fill="#0b55a5"/><circle cx="1691.6" cy="865.26" r="8.6" fill="#0b55a5" stroke="#fff" stroke-width="0.6"/><circle cx="1708.5" cy="865.26" r="8.9" fill="#0b55a5" stroke="#fff" stroke-width="0.6"/><line x1="1732.3" y1="865.76" x2="1735.8" y2="865.76" stroke="#c8c8c8" stroke-width="1"/><path d="M109.7 898.3 L114.9 903.5 L120.1 898.3" fill="none" stroke="#3b6aa0" stroke-width="1.8"/><circle cx="695.4" cy="901.12" r="7.7" fill="#0b55a5"/><circle cx="713.3" cy="901.12" r="8.6" fill="#0b55a5" stroke="#fff" stroke-width="0.6"/><circle cx="730.2" cy="901.12" r="8.9" fill="#0b55a5" stroke="#fff" stroke-width="0.6"/><line x1="754.0" y1="901.62" x2="757.5" y2="901.62" stroke="#c8c8c8" stroke-width="1"/><circle cx="804.1" cy="901.12" r="7.7" fill="#0b55a5"/><circle cx="822.0" cy="901.12" r="8.6" fill="#0b55a5" stroke="#fff" stroke-width="0.6"/><circle cx="838.9" cy="901.12" r="8.9" fill="#0b55a5" stroke="#fff" stroke-width="0.6"/><line x1="862.7" y1="901.62" x2="866.2" y2="901.62" stroke="#c8c8c8" stroke-width="1"/><circle cx="912.8" cy="901.12" r="7.7" fill="#0b55a5"/><circle cx="930.7" cy="901.12" r="8.6" fill="#0b55a5" stroke="#fff" stroke-width="0.6"/><circle cx="947.6" cy="901.12" r="8.9" fill="#0b55a5" stroke="#fff" stroke-width="0.6"/><line x1="971.4" y1="901.62" x2="974.9" y2="901.62" stroke="#c8c8c8" stroke-width="1"/><circle cx="1021.5" cy="901.12" r="7.7" fill="#0b55a5"/><circle cx="1039.4" cy="901.12" r="8.6" fill="#0b55a5" stroke="#fff" stroke-width="0.6"/><circle cx="1056.3" cy="901.12" r="8.9" fill="#0b55a5" stroke="#fff" stroke-width="0.6"/><line x1="1080.1" y1="901.62" x2="1083.6" y2="901.62" stroke="#c8c8c8" stroke-width="1"/><circle cx="1130.2" cy="901.12" r="7.7" fill="#0b55a5"/><circle cx="1148.1" cy="901.12" r="8.6" fill="#0b55a5" stroke="#fff" stroke-width="0.6"/><circle cx="1165.0" cy="901.12" r="8.9" fill="#0b55a5" stroke="#fff" stroke-width="0.6"/><line x1="1188.8" y1="901.62" x2="1192.3" y2="901.62" stroke="#c8c8c8" stroke-width="1"/><circle cx="1238.9" cy="901.12" r="7.7" fill="#0b55a5"/><circle cx="1256.8" cy="901.12" r="8.6" fill="#0b55a5" stroke="#fff" stroke-width="0.6"/><circle cx="1273.7" cy="901.12" r="8.9" fill="#0b55a5" stroke="#fff" stroke-width="0.6"/><line x1="1297.5" y1="901.62" x2="1301.0" y2="901.62" stroke="#c8c8c8" stroke-width="1"/><circle cx="1347.6" cy="901.12" r="7.7" fill="#0b55a5"/><circle cx="1365.5" cy="901.12" r="8.6" fill="#0b55a5" stroke="#fff" stroke-width="0.6"/><circle cx="1382.4" cy="901.12" r="8.9" fill="#0b55a5" stroke="#fff" stroke-width="0.6"/><line x1="1406.2" y1="901.62" x2="1409.7" y2="901.62" stroke="#c8c8c8" stroke-width="1"/><circle cx="1456.3" cy="901.12" r="7.7" fill="#0b55a5"/><circle cx="1474.2" cy="901.12" r="8.6" fill="#0b55a5" stroke="#fff" stroke-width="0.6"/><circle cx="1491.1" cy="901.12" r="8.9" fill="#0b55a5" stroke="#fff" stroke-width="0.6"/><line x1="1514.9" y1="901.62" x2="1518.4" y2="901.62" stroke="#c8c8c8" stroke-width="1"/><circle cx="1565.0" cy="901.12" r="7.7" fill="#0b55a5"/><circle cx="1582.9" cy="901.12" r="8.6" fill="#0b55a5" stroke="#fff" stroke-width="0.6"/><circle cx="1599.8" cy="901.12" r="8.9" fill="#0b55a5" stroke="#fff" stroke-width="0.6"/><line x1="1623.6" y1="901.62" x2="1627.1" y2="901.62" stroke="#c8c8c8" stroke-width="1"/><circle cx="1673.7" cy="901.12" r="7.7" fill="#0b55a5"/><circle cx="1691.6" cy="901.12" r="8.6" fill="#0b55a5" stroke="#fff" stroke-width="0.6"/><circle cx="1708.5" cy="901.12" r="8.9" fill="#0b55a5" stroke="#fff" stroke-width="0.6"/><line x1="1732.3" y1="901.62" x2="1735.8" y2="901.62" stroke="#c8c8c8" stroke-width="1"/><circle cx="695.4" cy="936.98" r="7.7" fill="#0b55a5"/><circle cx="713.3" cy="936.98" r="8.6" fill="#0b55a5" stroke="#fff" stroke-width="0.6"/><circle cx="730.2" cy="936.98" r="8.9" fill="#0b55a5" stroke="#fff" stroke-width="0.6"/><line x1="754.0" y1="937.48" x2="757.5" y2="937.48" stroke="#c8c8c8" stroke-width="1"/><circle cx="804.1" cy="936.98" r="7.7" fill="#0b55a5"/><circle cx="822.0" cy="936.98" r="8.6" fill="#0b55a5" stroke="#fff" stroke-width="0.6"/><circle cx="838.9" cy="936.98" r="8.9" fill="#0b55a5" stroke="#fff" stroke-width="0.6"/><line x1="862.7" y1="937.48" x2="866.2" y2="937.48" stroke="#c8c8c8" stroke-width="1"/><circle cx="912.8" cy="936.98" r="7.7" fill="#0b55a5"/><circle cx="930.7" cy="936.98" r="8.6" fill="#0b55a5" stroke="#fff" stroke-width="0.6"/><circle cx="947.6" cy="936.98" r="8.9" fill="#0b55a5" stroke="#fff" stroke-width="0.6"/><line x1="971.4" y1="937.48" x2="974.9" y2="937.48" stroke="#c8c8c8" stroke-width="1"/><circle cx="1021.5" cy="936.98" r="7.7" fill="#0b55a5"/><circle cx="1039.4" cy="936.98" r="8.6" fill="#0b55a5" stroke="#fff" stroke-width="0.6"/><circle cx="1056.3" cy="936.98" r="8.9" fill="#0b55a5" stroke="#fff" stroke-width="0.6"/><line x1="1080.1" y1="937.48" x2="1083.6" y2="937.48" stroke="#c8c8c8" stroke-width="1"/><circle cx="1130.2" cy="936.98" r="7.7" fill="#0b55a5"/><circle cx="1148.1" cy="936.98" r="8.6" fill="#0b55a5" stroke="#fff" stroke-width="0.6"/><circle cx="1165.0" cy="936.98" r="8.9" fill="#0b55a5" stroke="#fff" stroke-width="0.6"/><line x1="1188.8" y1="937.48" x2="1192.3" y2="937.48" stroke="#c8c8c8" stroke-width="1"/><circle cx="1238.9" cy="936.98" r="7.7" fill="#0b55a5"/><circle cx="1256.8" cy="936.98" r="8.6" fill="#0b55a5" stroke="#fff" stroke-width="0.6"/><circle cx="1273.7" cy="936.98" r="8.9" fill="#0b55a5" stroke="#fff" stroke-width="0.6"/><line x1="1297.5" y1="937.48" x2="1301.0" y2="937.48" stroke="#c8c8c8" stroke-width="1"/><circle cx="1347.6" cy="936.98" r="7.7" fill="#0b55a5"/><circle cx="1365.5" cy="936.98" r="8.6" fill="#0b55a5" stroke="#fff" stroke-width="0.6"/><circle cx="1382.4" cy="936.98" r="8.9" fill="#0b55a5" stroke="#fff" stroke-width="0.6"/><line x1="1406.2" y1="937.48" x2="1409.7" y2="937.48" stroke="#c8c8c8" stroke-width="1"/><circle cx="1456.3" cy="936.98" r="7.7" fill="#0b55a5"/><circle cx="1474.2" cy="936.98" r="8.6" fill="#0b55a5" stroke="#fff" stroke-width="0.6"/><circle cx="1491.1" cy="936.98" r="8.9" fill="#0b55a5" stroke="#fff" stroke-width="0.6"/><line x1="1514.9" y1="937.48" x2="1518.4" y2="937.48" stroke="#c8c8c8" stroke-width="1"/><circle cx="1565.0" cy="936.98" r="7.7" fill="#0b55a5"/><circle cx="1582.9" cy="936.98" r="8.6" fill="#0b55a5" stroke="#fff" stroke-width="0.6"/><circle cx="1599.8" cy="936.98" r="8.9" fill="#0b55a5" stroke="#fff" stroke-width="0.6"/><line x1="1623.6" y1="937.48" x2="1627.1" y2="937.48" stroke="#c8c8c8" stroke-width="1"/><circle cx="1673.7" cy="936.98" r="7.7" fill="#0b55a5"/><circle cx="1691.6" cy="936.98" r="8.6" fill="#0b55a5" stroke="#fff" stroke-width="0.6"/><circle cx="1708.5" cy="936.98" r="8.9" fill="#0b55a5" stroke="#fff" stroke-width="0.6"/><line x1="1732.3" y1="937.48" x2="1735.8" y2="937.48" stroke="#c8c8c8" stroke-width="1"/><path d="M87.5 970.0 L92.7 975.2 L97.9 970.0" fill="none" stroke="#3b6aa0" stroke-width="1.8"/><circle cx="695.4" cy="972.84" r="7.7" fill="#0b55a5"/><circle cx="713.3" cy="972.84" r="8.6" fill="#0b55a5" stroke="#fff" stroke-width="0.6"/><circle cx="730.2" cy="972.84" r="8.9" fill="#0b55a5" stroke="#fff" stroke-width="0.6"/><line x1="754.0" y1="973.34" x2="757.5" y2="973.34" stroke="#c8c8c8" stroke-width="1"/><circle cx="804.1" cy="972.84" r="7.7" fill="#0b55a5"/><circle cx="822.0" cy="972.84" r="8.6" fill="#0b55a5" stroke="#fff" stroke-width="0.6"/><circle cx="838.9" cy="972.84" r="8.9" fill="#0b55a5" stroke="#fff" stroke-width="0.6"/><line x1="862.7" y1="973.34" x2="866.2" y2="973.34" stroke="#c8c8c8" stroke-width="1"/><circle cx="912.8" cy="972.84" r="7.7" fill="#0b55a5"/><circle cx="930.7" cy="972.84" r="8.6" fill="#0b55a5" stroke="#fff" stroke-width="0.6"/><circle cx="947.6" cy="972.84" r="8.9" fill="#0b55a5" stroke="#fff" stroke-width="0.6"/><line x1="971.4" y1="973.34" x2="974.9" y2="973.34" stroke="#c8c8c8" stroke-width="1"/><circle cx="1021.5" cy="972.84" r="7.7" fill="#0b55a5"/><circle cx="1039.4" cy="972.84" r="8.6" fill="#0b55a5" stroke="#fff" stroke-width="0.6"/><circle cx="1056.3" cy="972.84" r="8.9" fill="#0b55a5" stroke="#fff" stroke-width="0.6"/><line x1="1080.1" y1="973.34" x2="1083.6" y2="973.34" stroke="#c8c8c8" stroke-width="1"/><circle cx="1130.2" cy="972.84" r="7.7" fill="#0b55a5"/><circle cx="1148.1" cy="972.84" r="8.6" fill="#0b55a5" stroke="#fff" stroke-width="0.6"/><circle cx="1165.0" cy="972.84" r="8.9" fill="#0b55a5" stroke="#fff" stroke-width="0.6"/><line x1="1188.8" y1="973.34" x2="1192.3" y2="973.34" stroke="#c8c8c8" stroke-width="1"/><circle cx="1238.9" cy="972.84" r="7.7" fill="#0b55a5"/><circle cx="1256.8" cy="972.84" r="8.6" fill="#0b55a5" stroke="#fff" stroke-width="0.6"/><circle cx="1273.7" cy="972.84" r="8.9" fill="#0b55a5" stroke="#fff" stroke-width="0.6"/><line x1="1297.5" y1="973.34" x2="1301.0" y2="973.34" stroke="#c8c8c8" stroke-width="1"/><circle cx="1347.6" cy="972.84" r="7.7" fill="#0b55a5"/><circle cx="1365.5" cy="972.84" r="8.6" fill="#0b55a5" stroke="#fff" stroke-width="0.6"/><circle cx="1382.4" cy="972.84" r="8.9" fill="#0b55a5" stroke="#fff" stroke-width="0.6"/><line x1="1406.2" y1="973.34" x2="1409.7" y2="973.34" stroke="#c8c8c8" stroke-width="1"/><circle cx="1456.3" cy="972.84" r="7.7" fill="#0b55a5"/><circle cx="1474.2" cy="972.84" r="8.6" fill="#0b55a5" stroke="#fff" stroke-width="0.6"/><circle cx="1491.1" cy="972.84" r="8.9" fill="#0b55a5" stroke="#fff" stroke-width="0.6"/><line x1="1514.9" y1="973.34" x2="1518.4" y2="973.34" stroke="#c8c8c8" stroke-width="1"/><circle cx="1565.0" cy="972.84" r="7.7" fill="#0b55a5"/><circle cx="1582.9" cy="972.84" r="8.6" fill="#0b55a5" stroke="#fff" stroke-width="0.6"/><circle cx="1599.8" cy="972.84" r="8.9" fill="#0b55a5" stroke="#fff" stroke-width="0.6"/><line x1="1623.6" y1="973.34" x2="1627.1" y2="973.34" stroke="#c8c8c8" stroke-width="1"/><circle cx="1673.7" cy="972.84" r="7.7" fill="#0b55a5"/><circle cx="1691.6" cy="972.84" r="8.6" fill="#0b55a5" stroke="#fff" stroke-width="0.6"/><circle cx="1708.5" cy="972.84" r="8.9" fill="#0b55a5" stroke="#fff" stroke-width="0.6"/><line x1="1732.3" y1="973.34" x2="1735.8" y2="973.34" stroke="#c8c8c8" stroke-width="1"/><path d="M100.5 1005.9 L105.7 1011.1 L110.9 1005.9" fill="none" stroke="#3b6aa0" stroke-width="1.8"/><circle cx="695.4" cy="1008.70" r="7.7" fill="#0b55a5"/><circle cx="713.3" cy="1008.70" r="8.6" fill="#0b55a5" stroke="#fff" stroke-width="0.6"/><circle cx="730.2" cy="1008.70" r="8.9" fill="#0b55a5" stroke="#fff" stroke-width="0.6"/><line x1="754.0" y1="1009.20" x2="757.5" y2="1009.20" stroke="#c8c8c8" stroke-width="1"/><circle cx="804.1" cy="1008.70" r="7.7" fill="#0b55a5"/><circle cx="822.0" cy="1008.70" r="8.6" fill="#0b55a5" stroke="#fff" stroke-width="0.6"/><circle cx="838.9" cy="1008.70" r="8.9" fill="#0b55a5" stroke="#fff" stroke-width="0.6"/><line x1="862.7" y1="1009.20" x2="866.2" y2="1009.20" stroke="#c8c8c8" stroke-width="1"/><circle cx="912.8" cy="1008.70" r="7.7" fill="#0b55a5"/><circle cx="930.7" cy="1008.70" r="8.6" fill="#0b55a5" stroke="#fff" stroke-width="0.6"/><circle cx="947.6" cy="1008.70" r="8.9" fill="#0b55a5" stroke="#fff" stroke-width="0.6"/><line x1="971.4" y1="1009.20" x2="974.9" y2="1009.20" stroke="#c8c8c8" stroke-width="1"/><circle cx="1021.5" cy="1008.70" r="7.7" fill="#0b55a5"/><circle cx="1039.4" cy="1008.70" r="8.6" fill="#0b55a5" stroke="#fff" stroke-width="0.6"/><circle cx="1056.3" cy="1008.70" r="8.9" fill="#0b55a5" stroke="#fff" stroke-width="0.6"/><line x1="1080.1" y1="1009.20" x2="1083.6" y2="1009.20" stroke="#c8c8c8" stroke-width="1"/><circle cx="1130.2" cy="1008.70" r="7.7" fill="#0b55a5"/><circle cx="1148.1" cy="1008.70" r="8.6" fill="#0b55a5" stroke="#fff" stroke-width="0.6"/><circle cx="1165.0" cy="1008.70" r="8.9" fill="#0b55a5" stroke="#fff" stroke-width="0.6"/><line x1="1188.8" y1="1009.20" x2="1192.3" y2="1009.20" stroke="#c8c8c8" stroke-width="1"/><circle cx="1238.9" cy="1008.70" r="7.7" fill="#0b55a5"/><circle cx="1256.8" cy="1008.70" r="8.6" fill="#0b55a5" stroke="#fff" stroke-width="0.6"/><circle cx="1273.7" cy="1008.70" r="8.9" fill="#0b55a5" stroke="#fff" stroke-width="0.6"/><line x1="1297.5" y1="1009.20" x2="1301.0" y2="1009.20" stroke="#c8c8c8" stroke-width="1"/><circle cx="1347.6" cy="1008.70" r="7.7" fill="#0b55a5"/><circle cx="1365.5" cy="1008.70" r="8.6" fill="#0b55a5" stroke="#fff" stroke-width="0.6"/><circle cx="1382.4" cy="1008.70" r="8.9" fill="#0b55a5" stroke="#fff" stroke-width="0.6"/><line x1="1406.2" y1="1009.20" x2="1409.7" y2="1009.20" stroke="#c8c8c8" stroke-width="1"/><circle cx="1456.3" cy="1008.70" r="7.7" fill="#0b55a5"/><circle cx="1474.2" cy="1008.70" r="8.6" fill="#0b55a5" stroke="#fff" stroke-width="0.6"/><circle cx="1491.1" cy="1008.70" r="8.9" fill="#0b55a5" stroke="#fff" stroke-width="0.6"/><line x1="1514.9" y1="1009.20" x2="1518.4" y2="1009.20" stroke="#c8c8c8" stroke-width="1"/><circle cx="1565.0" cy="1008.70" r="7.7" fill="#0b55a5"/><circle cx="1582.9" cy="1008.70" r="8.6" fill="#0b55a5" stroke="#fff" stroke-width="0.6"/><circle cx="1599.8" cy="1008.70" r="8.9" fill="#0b55a5" stroke="#fff" stroke-width="0.6"/><line x1="1623.6" y1="1009.20" x2="1627.1" y2="1009.20" stroke="#c8c8c8" stroke-width="1"/><circle cx="1673.7" cy="1008.70" r="7.7" fill="#0b55a5"/><circle cx="1691.6" cy="1008.70" r="8.6" fill="#0b55a5" stroke="#fff" stroke-width="0.6"/><circle cx="1708.5" cy="1008.70" r="8.9" fill="#0b55a5" stroke="#fff" stroke-width="0.6"/><line x1="1732.3" y1="1009.20" x2="1735.8" y2="1009.20" stroke="#c8c8c8" stroke-width="1"/><path d="M110.4 1041.8 L115.6 1047.0 L120.8 1041.8" fill="none" stroke="#3b6aa0" stroke-width="1.8"/><circle cx="695.4" cy="1044.56" r="7.7" fill="#0b55a5"/><circle cx="713.3" cy="1044.56" r="8.6" fill="#0b55a5" stroke="#fff" stroke-width="0.6"/><circle cx="730.2" cy="1044.56" r="8.9" fill="#0b55a5" stroke="#fff" stroke-width="0.6"/><line x1="754.0" y1="1045.06" x2="757.5" y2="1045.06" stroke="#c8c8c8" stroke-width="1"/><circle cx="804.1" cy="1044.56" r="7.7" fill="#0b55a5"/><circle cx="822.0" cy="1044.56" r="8.6" fill="#0b55a5" stroke="#fff" stroke-width="0.6"/><circle cx="838.9" cy="1044.56" r="8.9" fill="#0b55a5" stroke="#fff" stroke-width="0.6"/><line x1="862.7" y1="1045.06" x2="866.2" y2="1045.06" stroke="#c8c8c8" stroke-width="1"/><circle cx="912.8" cy="1044.56" r="7.7" fill="#0b55a5"/><circle cx="930.7" cy="1044.56" r="8.6" fill="#0b55a5" stroke="#fff" stroke-width="0.6"/><circle cx="947.6" cy="1044.56" r="8.9" fill="#0b55a5" stroke="#fff" stroke-width="0.6"/><line x1="971.4" y1="1045.06" x2="974.9" y2="1045.06" stroke="#c8c8c8" stroke-width="1"/><circle cx="1021.5" cy="1044.56" r="7.7" fill="#0b55a5"/><circle cx="1039.4" cy="1044.56" r="8.6" fill="#0b55a5" stroke="#fff" stroke-width="0.6"/><circle cx="1056.3" cy="1044.56" r="8.9" fill="#0b55a5" stroke="#fff" stroke-width="0.6"/><line x1="1080.1" y1="1045.06" x2="1083.6" y2="1045.06" stroke="#c8c8c8" stroke-width="1"/><circle cx="1130.2" cy="1044.56" r="7.7" fill="#0b55a5"/><circle cx="1148.1" cy="1044.56" r="8.6" fill="#0b55a5" stroke="#fff" stroke-width="0.6"/><circle cx="1165.0" cy="1044.56" r="8.9" fill="#0b55a5" stroke="#fff" stroke-width="0.6"/><line x1="1188.8" y1="1045.06" x2="1192.3" y2="1045.06" stroke="#c8c8c8" stroke-width="1"/><circle cx="1238.9" cy="1044.56" r="7.7" fill="#0b55a5"/><circle cx="1256.8" cy="1044.56" r="8.6" fill="#0b55a5" stroke="#fff" stroke-width="0.6"/><circle cx="1273.7" cy="1044.56" r="8.9" fill="#0b55a5" stroke="#fff" stroke-width="0.6"/><line x1="1297.5" y1="1045.06" x2="1301.0" y2="1045.06" stroke="#c8c8c8" stroke-width="1"/><circle cx="1347.6" cy="1044.56" r="7.7" fill="#0b55a5"/><circle cx="1365.5" cy="1044.56" r="8.6" fill="#0b55a5" stroke="#fff" stroke-width="0.6"/><circle cx="1382.4" cy="1044.56" r="8.9" fill="#0b55a5" stroke="#fff" stroke-width="0.6"/><line x1="1406.2" y1="1045.06" x2="1409.7" y2="1045.06" stroke="#c8c8c8" stroke-width="1"/><circle cx="1456.3" cy="1044.56" r="7.7" fill="#0b55a5"/><circle cx="1474.2" cy="1044.56" r="8.6" fill="#0b55a5" stroke="#fff" stroke-width="0.6"/><circle cx="1491.1" cy="1044.56" r="8.9" fill="#0b55a5" stroke="#fff" stroke-width="0.6"/><line x1="1514.9" y1="1045.06" x2="1518.4" y2="1045.06" stroke="#c8c8c8" stroke-width="1"/><circle cx="1565.0" cy="1044.56" r="7.7" fill="#0b55a5"/><circle cx="1582.9" cy="1044.56" r="8.6" fill="#0b55a5" stroke="#fff" stroke-width="0.6"/><circle cx="1599.8" cy="1044.56" r="8.9" fill="#0b55a5" stroke="#fff" stroke-width="0.6"/><line x1="1623.6" y1="1045.06" x2="1627.1" y2="1045.06" stroke="#c8c8c8" stroke-width="1"/><circle cx="1673.7" cy="1044.56" r="7.7" fill="#0b55a5"/><circle cx="1691.6" cy="1044.56" r="8.6" fill="#0b55a5" stroke="#fff" stroke-width="0.6"/><circle cx="1708.5" cy="1044.56" r="8.9" fill="#0b55a5" stroke="#fff" stroke-width="0.6"/><line x1="1732.3" y1="1045.06" x2="1735.8" y2="1045.06" stroke="#c8c8c8" stroke-width="1"/><circle cx="695.4" cy="1080.42" r="7.7" fill="#0b55a5"/><circle cx="713.3" cy="1080.42" r="8.6" fill="#0b55a5" stroke="#fff" stroke-width="0.6"/><circle cx="730.2" cy="1080.42" r="8.9" fill="#0b55a5" stroke="#fff" stroke-width="0.6"/><line x1="754.0" y1="1080.92" x2="757.5" y2="1080.92" stroke="#c8c8c8" stroke-width="1"/><circle cx="804.1" cy="1080.42" r="7.7" fill="#0b55a5"/><circle cx="822.0" cy="1080.42" r="8.6" fill="#0b55a5" stroke="#fff" stroke-width="0.6"/><circle cx="838.9" cy="1080.42" r="8.9" fill="#0b55a5" stroke="#fff" stroke-width="0.6"/><line x1="862.7" y1="1080.92" x2="866.2" y2="1080.92" stroke="#c8c8c8" stroke-width="1"/><circle cx="912.8" cy="1080.42" r="7.7" fill="#0b55a5"/><circle cx="930.7" cy="1080.42" r="8.6" fill="#0b55a5" stroke="#fff" stroke-width="0.6"/><circle cx="947.6" cy="1080.42" r="8.9" fill="#0b55a5" stroke="#fff" stroke-width="0.6"/><line x1="971.4" y1="1080.92" x2="974.9" y2="1080.92" stroke="#c8c8c8" stroke-width="1"/><circle cx="1021.5" cy="1080.42" r="7.7" fill="#0b55a5"/><circle cx="1039.4" cy="1080.42" r="8.6" fill="#0b55a5" stroke="#fff" stroke-width="0.6"/><circle cx="1056.3" cy="1080.42" r="8.9" fill="#0b55a5" stroke="#fff" stroke-width="0.6"/><line x1="1080.1" y1="1080.92" x2="1083.6" y2="1080.92" stroke="#c8c8c8" stroke-width="1"/><circle cx="1130.2" cy="1080.42" r="7.7" fill="#0b55a5"/><circle cx="1148.1" cy="1080.42" r="8.6" fill="#0b55a5" stroke="#fff" stroke-width="0.6"/><circle cx="1165.0" cy="1080.42" r="8.9" fill="#0b55a5" stroke="#fff" stroke-width="0.6"/><line x1="1188.8" y1="1080.92" x2="1192.3" y2="1080.92" stroke="#c8c8c8" stroke-width="1"/><circle cx="1238.9" cy="1080.42" r="7.7" fill="#0b55a5"/><circle cx="1256.8" cy="1080.42" r="8.6" fill="#0b55a5" stroke="#fff" stroke-width="0.6"/><circle cx="1273.7" cy="1080.42" r="8.9" fill="#0b55a5" stroke="#fff" stroke-width="0.6"/><line x1="1297.5" y1="1080.92" x2="1301.0" y2="1080.92" stroke="#c8c8c8" stroke-width="1"/><circle cx="1347.6" cy="1080.42" r="7.7" fill="#0b55a5"/><circle cx="1365.5" cy="1080.42" r="8.6" fill="#0b55a5" stroke="#fff" stroke-width="0.6"/><circle cx="1382.4" cy="1080.42" r="8.9" fill="#0b55a5" stroke="#fff" stroke-width="0.6"/><line x1="1406.2" y1="1080.92" x2="1409.7" y2="1080.92" stroke="#c8c8c8" stroke-width="1"/><circle cx="1456.3" cy="1080.42" r="7.7" fill="#0b55a5"/><circle cx="1474.2" cy="1080.42" r="8.6" fill="#0b55a5" stroke="#fff" stroke-width="0.6"/><circle cx="1491.1" cy="1080.42" r="8.9" fill="#0b55a5" stroke="#fff" stroke-width="0.6"/><line x1="1514.9" y1="1080.92" x2="1518.4" y2="1080.92" stroke="#c8c8c8" stroke-width="1"/><circle cx="1565.0" cy="1080.42" r="7.7" fill="#0b55a5"/><circle cx="1582.9" cy="1080.42" r="8.6" fill="#0b55a5" stroke="#fff" stroke-width="0.6"/><circle cx="1599.8" cy="1080.42" r="8.9" fill="#0b55a5" stroke="#fff" stroke-width="0.6"/><line x1="1623.6" y1="1080.92" x2="1627.1" y2="1080.92" stroke="#c8c8c8" stroke-width="1"/><circle cx="1673.7" cy="1080.42" r="7.7" fill="#0b55a5"/><circle cx="1691.6" cy="1080.42" r="8.6" fill="#0b55a5" stroke="#fff" stroke-width="0.6"/><circle cx="1708.5" cy="1080.42" r="8.9" fill="#0b55a5" stroke="#fff" stroke-width="0.6"/><line x1="1732.3" y1="1080.92" x2="1735.8" y2="1080.92" stroke="#c8c8c8" stroke-width="1"/><circle cx="695.4" cy="1116.28" r="7.7" fill="#0b55a5"/><circle cx="713.3" cy="1116.28" r="8.6" fill="#0b55a5" stroke="#fff" stroke-width="0.6"/><circle cx="730.2" cy="1116.28" r="8.9" fill="#0b55a5" stroke="#fff" stroke-width="0.6"/><line x1="754.0" y1="1116.78" x2="757.5" y2="1116.78" stroke="#c8c8c8" stroke-width="1"/><circle cx="804.1" cy="1116.28" r="7.7" fill="#0b55a5"/><circle cx="822.0" cy="1116.28" r="8.6" fill="#0b55a5" stroke="#fff" stroke-width="0.6"/><circle cx="838.9" cy="1116.28" r="8.9" fill="#0b55a5" stroke="#fff" stroke-width="0.6"/><line x1="862.7" y1="1116.78" x2="866.2" y2="1116.78" stroke="#c8c8c8" stroke-width="1"/><circle cx="912.8" cy="1116.28" r="7.7" fill="#0b55a5"/><circle cx="930.7" cy="1116.28" r="8.6" fill="#0b55a5" stroke="#fff" stroke-width="0.6"/><circle cx="947.6" cy="1116.28" r="8.9" fill="#0b55a5" stroke="#fff" stroke-width="0.6"/><line x1="971.4" y1="1116.78" x2="974.9" y2="1116.78" stroke="#c8c8c8" stroke-width="1"/><circle cx="1021.5" cy="1116.28" r="7.7" fill="#0b55a5"/><circle cx="1039.4" cy="1116.28" r="8.6" fill="#0b55a5" stroke="#fff" stroke-width="0.6"/><circle cx="1056.3" cy="1116.28" r="8.9" fill="#0b55a5" stroke="#fff" stroke-width="0.6"/><line x1="1080.1" y1="1116.78" x2="1083.6" y2="1116.78" stroke="#c8c8c8" stroke-width="1"/><circle cx="1130.2" cy="1116.28" r="7.7" fill="#0b55a5"/><circle cx="1148.1" cy="1116.28" r="8.6" fill="#0b55a5" stroke="#fff" stroke-width="0.6"/><circle cx="1165.0" cy="1116.28" r="8.9" fill="#0b55a5" stroke="#fff" stroke-width="0.6"/><line x1="1188.8" y1="1116.78" x2="1192.3" y2="1116.78" stroke="#c8c8c8" stroke-width="1"/><circle cx="1238.9" cy="1116.28" r="7.7" fill="#0b55a5"/><circle cx="1256.8" cy="1116.28" r="8.6" fill="#0b55a5" stroke="#fff" stroke-width="0.6"/><circle cx="1273.7" cy="1116.28" r="8.9" fill="#0b55a5" stroke="#fff" stroke-width="0.6"/><line x1="1297.5" y1="1116.78" x2="1301.0" y2="1116.78" stroke="#c8c8c8" stroke-width="1"/><circle cx="1347.6" cy="1116.28" r="7.7" fill="#0b55a5"/><circle cx="1365.5" cy="1116.28" r="8.6" fill="#0b55a5" stroke="#fff" stroke-width="0.6"/><circle cx="1382.4" cy="1116.28" r="8.9" fill="#0b55a5" stroke="#fff" stroke-width="0.6"/><line x1="1406.2" y1="1116.78" x2="1409.7" y2="1116.78" stroke="#c8c8c8" stroke-width="1"/><circle cx="1456.3" cy="1116.28" r="7.7" fill="#0b55a5"/><circle cx="1474.2" cy="1116.28" r="8.6" fill="#0b55a5" stroke="#fff" stroke-width="0.6"/><circle cx="1491.1" cy="1116.28" r="8.9" fill="#0b55a5" stroke="#fff" stroke-width="0.6"/><line x1="1514.9" y1="1116.78" x2="1518.4" y2="1116.78" stroke="#c8c8c8" stroke-width="1"/><circle cx="1565.0" cy="1116.28" r="7.7" fill="#0b55a5"/><circle cx="1582.9" cy="1116.28" r="8.6" fill="#0b55a5" stroke="#fff" stroke-width="0.6"/><circle cx="1599.8" cy="1116.28" r="8.9" fill="#0b55a5" stroke="#fff" stroke-width="0.6"/><line x1="1623.6" y1="1116.78" x2="1627.1" y2="1116.78" stroke="#c8c8c8" stroke-width="1"/><circle cx="1673.7" cy="1116.28" r="7.7" fill="#0b55a5"/><circle cx="1691.6" cy="1116.28" r="8.6" fill="#0b55a5" stroke="#fff" stroke-width="0.6"/><circle cx="1708.5" cy="1116.28" r="8.9" fill="#0b55a5" stroke="#fff" stroke-width="0.6"/><line x1="1732.3" y1="1116.78" x2="1735.8" y2="1116.78" stroke="#c8c8c8" stroke-width="1"/></svg>
</body></html>
